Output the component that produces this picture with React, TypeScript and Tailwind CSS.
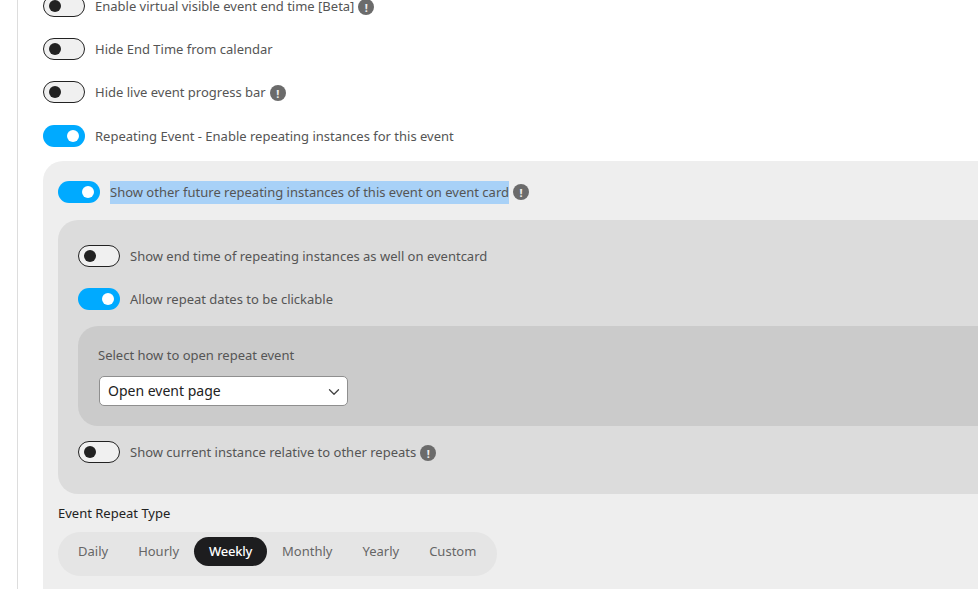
import { ReactNode } from "react";
import { ChevronDown } from "lucide-react";

const Info = () => (
  <span className="ml-[4px] flex h-4 w-4 shrink-0 items-center justify-center rounded-full bg-[#6b6b6b] text-[11px] font-bold leading-none text-[#eeeeee]">
    !
  </span>
);

function Toggle({ on }: { on?: boolean }) {
  return on ? (
    <span className="flex h-[22px] w-[42px] shrink-0 items-center justify-end rounded-full bg-[#00aaff] pr-[6px]">
      <span className="h-3 w-3 rounded-full bg-white" />
    </span>
  ) : (
    <span className="flex h-[22px] w-[42px] shrink-0 items-center rounded-full border border-[#222222] bg-[#f0f0f0] pl-[5px]">
      <span className="h-3 w-3 rounded-full bg-[#222222]" />
    </span>
  );
}

function Row({ on, info, className, children }: { on?: boolean; info?: boolean; className?: string; children: ReactNode }) {
  return (
    <div className={`flex h-[22px] items-center ${className ?? ""}`}>
      <Toggle on={on} />
      <div className="flex items-center pt-[2px]">
        <span className="ml-[10px] whitespace-nowrap text-[13px] text-[#555555]">{children}</span>
        {info && <Info />}
      </div>
    </div>
  );
}

const repeatTypes = ["Daily", "Hourly", "Weekly", "Monthly", "Yearly", "Custom"];

export default function App() {
  return (
    <div className="h-[589px] w-[978px] overflow-hidden bg-white font-['Noto_Sans',sans-serif]">
      <div className="ml-[17px] h-full w-[1100px] overflow-hidden border-l border-[#dddddd] pl-[25px]">
        <div className="-mt-[5px]">
          <Row info>Enable virtual visible event end time [Beta]</Row>
          <Row className="mt-[21px]">Hide End Time from calendar</Row>
          <Row info className="mt-[21px]">Hide live event progress bar</Row>
          <Row on className="mt-[22px]">Repeating Event - Enable repeating instances for this event</Row>

          <div className="mt-[14px] rounded-tl-[20px] bg-[#eeeeee] px-[15px] pt-5 pb-5">
            <div className="flex h-[22px] items-center">
              <Toggle on />
              <span className="ml-[10px] whitespace-nowrap bg-[#a8d1f7] text-[13px] leading-[23px] text-[#555555]">
                Show other future repeating instances of this event on event card
              </span>
              <Info />
            </div>

            <div className="mt-[17px] h-[274px] rounded-[20px] bg-[#dcdcdc] px-5 pt-[25px]">
              <Row>Show end time of repeating instances as well on eventcard</Row>
              <Row on className="mt-[21px]">Allow repeat dates to be clickable</Row>

              <div className="mt-4 h-[100px] rounded-[20px] bg-[#cbcbcb] px-5 pt-5">
                <p className="text-[13px] leading-[19px] text-[#555555]">Select how to open repeat event</p>
                <div className="mt-[11px] ml-px flex h-[30px] w-[249px] items-center justify-between rounded-[5px] border border-[#8f8f8f] bg-white pr-[4px] pl-2 text-sm text-[#222222]">
                  Open event page
                  <ChevronDown className="mt-px h-[18px] w-[18px] text-[#444444]" strokeWidth={1.75} />
                </div>
              </div>

              <Row info className="mt-[15px]">Show current instance relative to other repeats</Row>
            </div>

            <p className="mt-[10px] text-[13px] leading-[19px] text-[#222222]">Event Repeat Type</p>
            <div className="mt-[9px] flex h-[44px] w-[439px] items-start rounded-full bg-[#e5e5e5] px-[5px] pt-[5px]">
              {repeatTypes.map((t) =>
                t === "Weekly" ? (
                  <span key={t} className="rounded-full bg-[#1d1d1f] px-[15px] py-[5px] text-[13px] font-medium leading-[19px] tracking-[-0.25px] text-white">
                    {t}
                  </span>
                ) : (
                  <span key={t} className="px-[15px] py-[5px] text-[13px] leading-[19px] text-[#666666]">
                    {t}
                  </span>
                ),
              )}
            </div>
          </div>
        </div>
      </div>
    </div>
  );
}
